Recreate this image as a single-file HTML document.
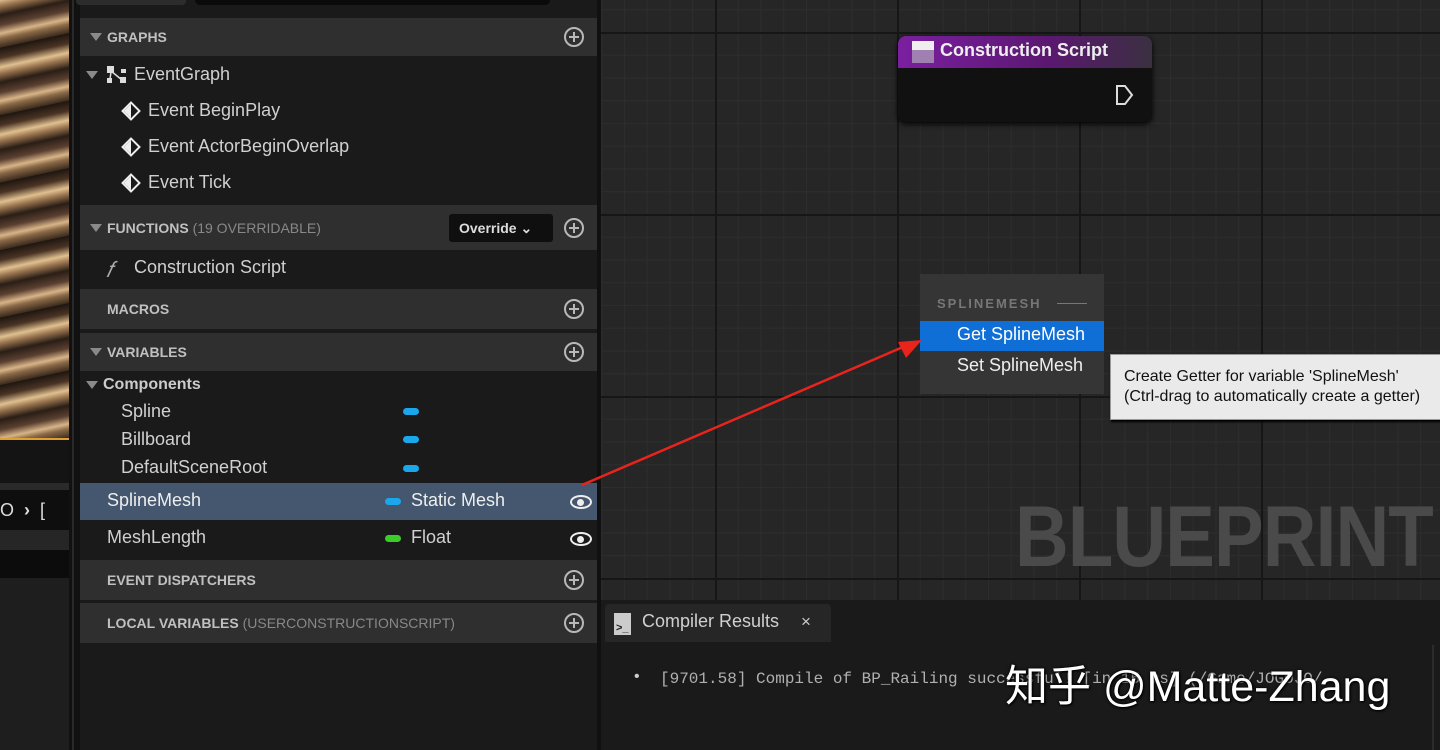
<!DOCTYPE html>
<html><head><meta charset="utf-8"><style>
*{margin:0;padding:0;box-sizing:border-box}
body{width:1440px;height:750px;overflow:hidden;background:#1a1a1a;font-family:"Liberation Sans","Noto Sans CJK SC",sans-serif;position:relative;color:#c8c8c8}
.a{position:absolute}
.photo{left:0;top:0;width:69px;height:438px;background:
repeating-linear-gradient(-12deg,#3a2a1c 0px,#8a6a48 9px,#d8b488 14px,#5a4030 22px,#2a1e16 32px,#9a7550 41px,#e0c090 47px,#4a3424 56px,#1e1610 66px);}
.hdr{left:80px;width:517px;background:#2f2f2f;font-size:14px;font-weight:bold;color:#c0c0c0;display:flex;align-items:center}
.hdr .t{margin-left:27px}
.tri{position:absolute;left:10px;width:0;height:0;border-left:6px solid transparent;border-right:6px solid transparent;border-top:8px solid #8a8a8a}
.plus{position:absolute;right:13px;width:20px;height:20px;border:2px solid #b8b8b8;border-radius:50%}
.plus:before{content:"";position:absolute;left:3px;top:7px;width:10px;height:2px;background:#b8b8b8}
.plus:after{content:"";position:absolute;left:7px;top:3px;width:2px;height:10px;background:#b8b8b8}
.it{font-size:18px;color:#d0d0d0;white-space:nowrap}
.dia{position:absolute;width:14px;height:14px;border:2px solid #eee;transform:rotate(45deg);background:linear-gradient(45deg,#eee 50%,transparent 50%)}
.pill{position:absolute;width:16px;height:7px;border-radius:4px}
.eye{position:absolute;width:22px;height:14px;border:2px solid #eee;border-radius:50%/50%}
.eye:after{content:"";position:absolute;left:5px;top:2px;width:7px;height:7px;border-radius:50%;background:#eee}
</style></head><body>
<div class="a photo"></div>
<div class="a" style="left:0;top:438px;width:69px;height:2px;background:#e0a030"></div>
<div class="a" style="left:0;top:440px;width:69px;height:310px;background:#141414"></div>
<div class="a" style="left:0;top:483px;width:69px;height:7px;background:#2a2a2a"></div>
<div class="a" style="left:0;top:490px;width:69px;height:40px;background:#0e0e0e;color:#ddd;font-size:18px;padding-top:10px">O &nbsp;<b>›</b> &nbsp;[</div>
<div class="a" style="left:0;top:530px;width:69px;height:20px;background:#262626"></div>
<div class="a" style="left:0;top:550px;width:69px;height:28px;background:#0c0c0c"></div>
<div class="a" style="left:0;top:578px;width:69px;height:172px;background:#1e1e1e"></div>
<div class="a" style="left:69px;top:0;width:11px;height:750px;background:#111"></div>
<div class="a" style="left:72px;top:0;width:2px;height:750px;background:#2a2a2a"></div>
<div class="a" style="left:80px;top:0;width:520px;height:750px;background:#1a1a1a"></div>
<div class="a" style="left:597px;top:0;width:4px;height:750px;background:#101010"></div>
<div class="a" style="left:76px;top:0;width:110px;height:5px;background:#2c2c2c;border-radius:0 0 4px 4px"></div>
<div class="a" style="left:195px;top:0;width:355px;height:5px;background:#0a0a0a;border-radius:0 0 6px 6px"></div>

<div class="a hdr" style="top:18px;height:38px"><div class="tri" style="top:15px"></div><span class="t">GRAPHS</span><div class="plus"></div></div>
<div class="a tri" style="left:86px;top:71px"></div>
<svg class="a" style="left:107px;top:66px" width="22" height="18"><rect x="0" y="0" width="7" height="7" fill="#ddd"/><rect x="14" y="3" width="5" height="4" fill="#ddd"/><rect x="0" y="12" width="5" height="5" fill="#ddd"/><rect x="13" y="11" width="6" height="6" fill="#ddd"/><path d="M4 5 L15 14 M4 6 L3 13" stroke="#ddd" stroke-width="1.5"/></svg>
<div class="a it" style="left:134px;top:64px">EventGraph</div>
<div class="dia" style="left:124px;top:104px"></div><div class="a it" style="left:148px;top:100px">Event BeginPlay</div>
<div class="dia" style="left:124px;top:140px"></div><div class="a it" style="left:148px;top:136px">Event ActorBeginOverlap</div>
<div class="dia" style="left:124px;top:176px"></div><div class="a it" style="left:148px;top:172px">Event Tick</div>

<div class="a hdr" style="top:205px;height:45px"><div class="tri" style="top:19px"></div><span class="t">FUNCTIONS <span style="font-weight:normal;color:#888">(19 OVERRIDABLE)</span></span>
<div style="position:absolute;left:369px;top:9px;width:104px;height:28px;background:#0f0f0f;border-radius:3px;color:#ddd;font-size:14px;padding:6px 10px">Override ⌄</div><div class="plus"></div></div>
<div class="a it" style="left:106px;top:257px;font-style:italic;color:#aaa;font-family:'Liberation Serif',serif;font-size:22px">𝑓</div>
<div class="a it" style="left:134px;top:257px">Construction Script</div>
<div class="a hdr" style="top:289px;height:40px"><span class="t">MACROS</span><div class="plus"></div></div>
<div class="a hdr" style="top:333px;height:38px"><div class="tri" style="top:15px"></div><span class="t">VARIABLES</span><div class="plus"></div></div>
<div class="a tri" style="left:86px;top:381px"></div>
<div class="a" style="left:103px;top:376px;font-size:16px;font-weight:bold;color:#ccc">Components</div>
<div class="a it" style="left:121px;top:401px">Spline</div><div class="pill" style="left:403px;top:408px;background:#1aa7ec"></div>
<div class="a it" style="left:121px;top:429px">Billboard</div><div class="pill" style="left:403px;top:436px;background:#1aa7ec"></div>
<div class="a it" style="left:121px;top:457px">DefaultSceneRoot</div><div class="pill" style="left:403px;top:465px;background:#1aa7ec"></div>
<div class="a" style="left:80px;top:483px;width:517px;height:37px;background:#44576f"></div>
<div class="a it" style="left:107px;top:490px;color:#eee">SplineMesh</div><div class="pill" style="left:385px;top:498px;background:#1aa7ec"></div>
<div class="a it" style="left:411px;top:490px;color:#eee">Static Mesh</div><div class="eye" style="left:570px;top:495px"></div>
<div class="a it" style="left:107px;top:527px">MeshLength</div><div class="pill" style="left:385px;top:535px;background:#3ccc2a"></div>
<div class="a it" style="left:411px;top:527px">Float</div><div class="eye" style="left:570px;top:532px"></div>
<div class="a hdr" style="top:560px;height:40px"><span class="t">EVENT DISPATCHERS</span><div class="plus"></div></div>
<div class="a hdr" style="top:603px;height:40px"><span class="t">LOCAL VARIABLES <span style="font-weight:normal;color:#888">(USERCONSTRUCTIONSCRIPT)</span></span><div class="plus"></div></div>

<!-- graph -->
<div class="a" style="left:601px;top:0;width:839px;height:600px;background-color:#262626;background-image:linear-gradient(#161616 2px,transparent 2px),linear-gradient(90deg,#161616 2px,transparent 2px),linear-gradient(#2d2d2d 1px,transparent 1px),linear-gradient(90deg,#2d2d2d 1px,transparent 1px);background-size:182px 182px,182px 182px,22.75px 22.75px,22.75px 22.75px;background-position:0 32px,114px 0,0 32px,114px 0"></div>
<div class="a" style="left:1015px;top:488px;font-size:86px;font-weight:bold;color:#4a4a4a;letter-spacing:-1px;transform:scaleX(0.865);transform-origin:left;font-family:'Liberation Sans Narrow','Liberation Sans',sans-serif">BLUEPRINT</div>
<div class="a" style="left:898px;top:36px;width:254px;height:86px;border-radius:8px;background:#111;box-shadow:0 2px 6px #000;overflow:hidden">
<div style="height:32px;background:linear-gradient(90deg,#7b1fa0,#5a1870 60%,#3a3040);"></div></div>
<div class="a" style="left:912px;top:41px;width:22px;height:22px;background:linear-gradient(#eee 40%,#a080b0 40%)"></div>
<div class="a" style="left:940px;top:40px;font-size:18px;font-weight:bold;color:#eee">Construction Script</div>
<svg class="a" style="left:1115px;top:84px" width="20" height="22"><path d="M2 2 H10 L17 11 L10 20 H2 Z" fill="none" stroke="#ddd" stroke-width="2"/></svg>

<div class="a" style="left:920px;top:274px;width:184px;height:120px;background:#353535"></div>
<div class="a" style="left:937px;top:296px;font-size:13px;font-weight:bold;color:#777;letter-spacing:2px">SPLINEMESH</div>
<div class="a" style="left:1057px;top:303px;width:30px;height:1px;background:#777"></div>
<div class="a" style="left:920px;top:321px;width:184px;height:30px;background:#0f6fd6"></div>
<div class="a it" style="left:957px;top:324px;color:#fff">Get SplineMesh</div>
<div class="a it" style="left:957px;top:355px;color:#eee">Set SplineMesh</div>
<div class="a" style="left:1110px;top:354px;width:340px;height:66px;background:#eaeaea;border:1px solid #999;box-shadow:1px 2px 2px #000"></div>
<div class="a" style="left:1124px;top:367px;font-size:16px;color:#111;line-height:20px">Create Getter for variable 'SplineMesh'<br>(Ctrl-drag to automatically create a getter)</div>
<svg class="a" style="left:580px;top:330px" width="350" height="160"><line x1="2" y1="155" x2="330" y2="14" stroke="#e8241c" stroke-width="2.5"/><path d="M342 10 L318 12 L326 28 Z" fill="#e8241c"/></svg>

<!-- compiler -->
<div class="a" style="left:601px;top:600px;width:839px;height:150px;background:#1a1a1a"></div>
<div class="a" style="left:605px;top:604px;width:226px;height:38px;background:#262626;border-radius:4px 4px 0 0"></div>
<div class="a" style="left:614px;top:613px;width:17px;height:22px;background:#ccc"></div>
<div class="a" style="left:616px;top:622px;font-size:11px;color:#222;font-weight:bold">&gt;_</div>
<div class="a it" style="left:642px;top:611px">Compiler Results</div>
<div class="a" style="left:801px;top:612px;font-size:17px;color:#ccc">×</div>
<div class="a" style="left:1432px;top:645px;width:2px;height:105px;background:#2c2c2c"></div>
<div class="a" style="left:634px;top:668px;font-size:16px;color:#ccc">•</div>
<div class="a" style="left:660px;top:670px;font-family:'Liberation Mono',monospace;font-size:16px;color:#b0b0b0;white-space:nowrap">[9701.58] Compile of BP_Railing successful! [in 15 ms] (/Game/JOGOJO/</div>
<div class="a" style="left:1005px;top:652px;font-size:43px;color:#fff;white-space:nowrap;text-shadow:0 0 3px #000,1px 1px 2px #000">知乎 @Matte-Zhang</div>
</body></html>
